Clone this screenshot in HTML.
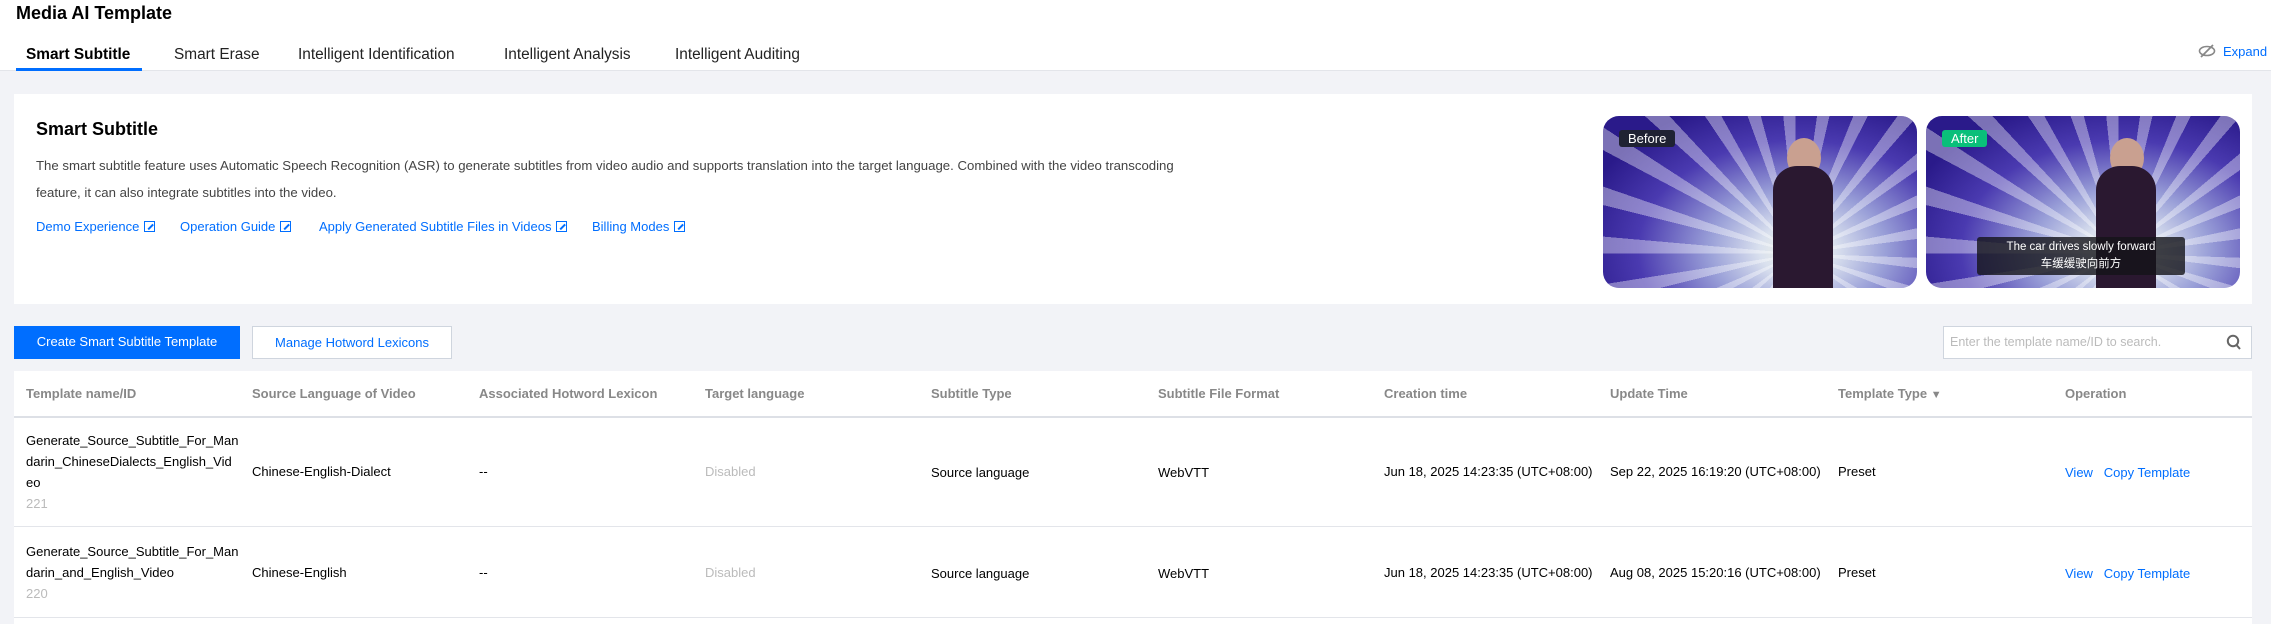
<!DOCTYPE html>
<html><head><meta charset="utf-8"><style>
*{box-sizing:border-box;margin:0;padding:0}
body{width:2271px;height:624px;overflow:hidden;background:#f2f3f7;font-family:"Liberation Sans","Noto Sans CJK SC",sans-serif;color:#000;position:relative}
.a{position:absolute;white-space:nowrap}
.hdr{position:absolute;left:0;top:0;width:2271px;height:71px;background:#fff;border-bottom:1px solid #e3e5ea}
.tab{position:absolute;top:46px;font-size:15.4px;color:#222}
.card{position:absolute;left:14px;top:94px;width:2238px;height:210px;background:#fff}
.lk{position:absolute;top:219px;font-size:13px;color:#006eff}
.lk i{display:inline-block;width:11px;height:11px;border:1.5px solid #006eff;margin-left:5px;vertical-align:-1px;position:relative}
.lk i:after{content:"";position:absolute;left:2px;top:4px;width:7px;height:1.5px;background:#006eff;transform:rotate(-45deg)}
.img{position:absolute;top:116px;width:314px;height:172px;border-radius:16px;overflow:hidden;
background:radial-gradient(ellipse at 62% 78%,#f4f8e8 0%,#d9e0ee 14%,#9aa0d8 32%,#4a3ab0 58%,#2a1a8a 82%),#2a1a8a}
.rays{position:absolute;inset:0;background:repeating-conic-gradient(from 200deg at 62% 80%,rgba(255,255,255,.38) 0deg 5deg,rgba(255,255,255,0) 5deg 14deg);}
.person{position:absolute;left:170px;top:50px;width:60px;height:122px;background:#2a1830;border-radius:24px 24px 0 0}
.head{position:absolute;left:184px;top:22px;width:34px;height:40px;background:#c9a090;border-radius:50%}
.tag{position:absolute;left:16px;top:14px;font-size:13px;color:#fff;padding:1px 9px;border-radius:3px}
.btn{position:absolute;top:326px;height:33px;font-size:13px;line-height:31px;text-align:center}
.tbl{position:absolute;left:14px;top:371px;width:2238px;height:253px;background:#fff}
.th{position:absolute;top:386px;font-size:13px;color:#888;font-weight:bold}
.td{position:absolute;font-size:13px;color:#000;white-space:nowrap}
.ln{position:absolute;left:14px;width:2238px;height:1px;background:#e3e5ea}
</style></head><body>
<div class="hdr"></div>
<div class="a" style="left:16px;top:3px;font-size:18px;font-weight:bold">Media AI Template</div>
<div class="tab" style="left:26px;font-weight:bold;color:#000">Smart Subtitle</div>
<div class="tab" style="left:174px">Smart Erase</div>
<div class="tab" style="left:298px">Intelligent Identification</div>
<div class="tab" style="left:504px">Intelligent Analysis</div>
<div class="tab" style="left:675px">Intelligent Auditing</div>
<div class="a" style="left:16px;top:68px;width:126px;height:3px;background:#006eff"></div>
<svg class="a" style="left:2198px;top:44px" width="18" height="14" viewBox="0 0 18 14"><ellipse cx="9" cy="7" rx="7.5" ry="4.5" fill="none" stroke="#888" stroke-width="1.6"/><line x1="3" y1="13" x2="15" y2="1" stroke="#888" stroke-width="1.8"/></svg>
<div class="a" style="left:2223px;top:44px;font-size:13px;color:#006eff">Expand</div>

<div class="card"></div>
<div class="a" style="left:36px;top:119px;font-size:18px;font-weight:bold">Smart Subtitle</div>
<div class="a" style="left:36px;top:158px;font-size:13.2px;color:#444">The smart subtitle feature uses Automatic Speech Recognition (ASR) to generate subtitles from video audio and supports translation into the target language. Combined with the video transcoding</div>
<div class="a" style="left:36px;top:185px;font-size:13.2px;color:#444">feature, it can also integrate subtitles into the video.</div>
<div class="lk" style="left:36px">Demo Experience<i></i></div>
<div class="lk" style="left:180px">Operation Guide<i></i></div>
<div class="lk" style="left:319px">Apply Generated Subtitle Files in Videos<i></i></div>
<div class="lk" style="left:592px">Billing Modes<i></i></div>

<div class="img" style="left:1603px"><div class="rays"></div><div class="head"></div><div class="person"></div><div class="tag" style="background:#1f2233">Before</div></div>
<div class="img" style="left:1926px"><div class="rays"></div><div class="head"></div><div class="person"></div><div class="tag" style="background:#0abf7a">After</div>
<div style="position:absolute;left:51px;top:121px;width:208px;height:38px;background:rgba(20,20,25,.8);border-radius:3px;color:#fff;text-align:center;font-size:11.5px;line-height:17px;padding-top:2px">The car drives slowly forward<br>车缓缓驶向前方</div></div>

<div class="btn" style="left:14px;width:226px;background:#006eff;color:#fff">Create Smart Subtitle Template</div>
<div class="btn" style="left:252px;width:200px;background:#fff;border:1px solid #cfd5de;color:#006eff">Manage Hotword Lexicons</div>
<div class="btn" style="left:1943px;width:309px;background:#fff;border:1px solid #cfd5de;color:#bbb;text-align:left;padding-left:6px;font-size:12.5px">Enter the template name/ID to search.</div>
<svg class="a" style="left:2226px;top:334px" width="16" height="17" viewBox="0 0 16 17"><circle cx="7" cy="7" r="5.2" fill="none" stroke="#666" stroke-width="2"/><line x1="10.5" y1="11" x2="14" y2="15" stroke="#666" stroke-width="2"/></svg>

<div class="tbl"></div>
<div class="ln" style="top:416px;height:2px;background:#dde0e6"></div>
<div class="ln" style="top:526px"></div>
<div class="ln" style="top:617px"></div>
<div class="th" style="left:26px">Template name/ID</div>
<div class="th" style="left:252px">Source Language of Video</div>
<div class="th" style="left:479px">Associated Hotword Lexicon</div>
<div class="th" style="left:705px">Target language</div>
<div class="th" style="left:931px">Subtitle Type</div>
<div class="th" style="left:1158px">Subtitle File Format</div>
<div class="th" style="left:1384px">Creation time</div>
<div class="th" style="left:1610px">Update Time</div>
<div class="th" style="left:1838px">Template Type <span style="font-size:11px">&#9660;</span></div>
<div class="th" style="left:2065px">Operation</div>

<div class="td" style="left:26px;top:430px;line-height:21px">Generate_Source_Subtitle_For_Man<br>darin_ChineseDialects_English_Vid<br>eo<br><span style="color:#bbb">221</span></div>
<div class="td" style="left:252px;top:464px">Chinese-English-Dialect</div>
<div class="td" style="left:479px;top:464px">--</div>
<div class="td" style="left:705px;top:464px;color:#bbb">Disabled</div>
<div class="td" style="left:931px;top:465px">Source language</div>
<div class="td" style="left:1158px;top:465px">WebVTT</div>
<div class="td" style="left:1384px;top:464px">Jun 18, 2025 14:23:35 (UTC+08:00)</div>
<div class="td" style="left:1610px;top:464px">Sep 22, 2025 16:19:20 (UTC+08:00)</div>
<div class="td" style="left:1838px;top:464px">Preset</div>
<div class="td" style="left:2065px;top:465px;color:#006eff">View&nbsp;&nbsp; Copy Template</div>

<div class="td" style="left:26px;top:541px;line-height:21px">Generate_Source_Subtitle_For_Man<br>darin_and_English_Video<br><span style="color:#bbb">220</span></div>
<div class="td" style="left:252px;top:565px">Chinese-English</div>
<div class="td" style="left:479px;top:565px">--</div>
<div class="td" style="left:705px;top:565px;color:#bbb">Disabled</div>
<div class="td" style="left:931px;top:566px">Source language</div>
<div class="td" style="left:1158px;top:566px">WebVTT</div>
<div class="td" style="left:1384px;top:565px">Jun 18, 2025 14:23:35 (UTC+08:00)</div>
<div class="td" style="left:1610px;top:565px">Aug 08, 2025 15:20:16 (UTC+08:00)</div>
<div class="td" style="left:1838px;top:565px">Preset</div>
<div class="td" style="left:2065px;top:566px;color:#006eff">View&nbsp;&nbsp; Copy Template</div>
</body></html>
